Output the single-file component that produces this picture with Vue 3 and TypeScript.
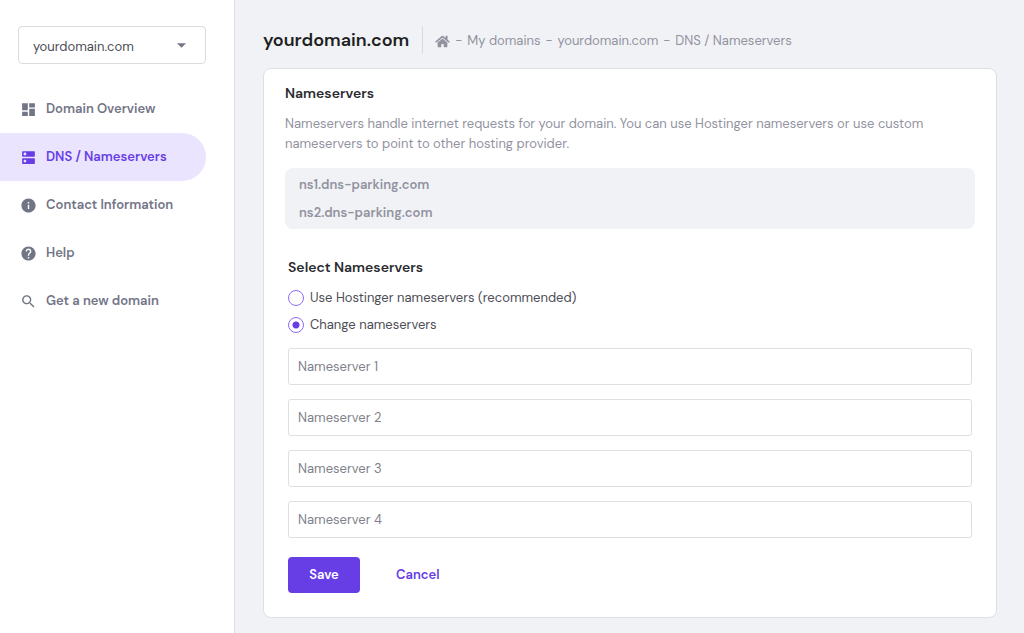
<script setup lang="ts">
import { ref } from 'vue'

interface NavItem {
  label: string
  path: string
}

const navItems: NavItem[] = [
  { label: 'Domain Overview', path: 'M3 13h8V3H3v10zm0 8h8v-6H3v6zm10 0h8V11h-8v10zm0-18v6h8V3h-8z' },
  {
    label: 'DNS / Nameservers',
    path: 'M20 13H4c-.55 0-1 .45-1 1v6c0 .55.45 1 1 1h16c.55 0 1-.45 1-1v-6c0-.55-.45-1-1-1zM7 19c-1.1 0-2-.9-2-2s.9-2 2-2 2 .9 2 2-.9 2-2 2zM20 3H4c-.55 0-1 .45-1 1v6c0 .55.45 1 1 1h16c.55 0 1-.45 1-1V4c0-.55-.45-1-1-1zM7 9c-1.1 0-2-.9-2-2s.9-2 2-2 2 .9 2 2-.9 2-2 2z',
  },
  {
    label: 'Contact Information',
    path: 'M12 2C6.48 2 2 6.48 2 12s4.48 10 10 10 10-4.48 10-10S17.52 2 12 2zm1 15h-2v-6h2v6zm0-8h-2V7h2v2z',
  },
  {
    label: 'Help',
    path: 'M12 2C6.48 2 2 6.48 2 12s4.48 10 10 10 10-4.48 10-10S17.52 2 12 2zm1 17h-2v-2h2v2zm2.07-7.75l-.9.92C13.45 12.9 13 13.5 13 15h-2v-.5c0-1.1.45-2.1 1.17-2.83l1.24-1.26c.37-.36.59-.86.59-1.41 0-1.1-.9-2-2-2s-2 .9-2 2H8c0-2.21 1.79-4 4-4s4 1.79 4 4c0 .88-.36 1.68-.93 2.25z',
  },
  {
    label: 'Get a new domain',
    path: 'M15.5 14h-.79l-.28-.27C15.41 12.59 16 11.11 16 9.5 16 5.91 13.09 3 9.5 3S3 5.91 3 9.5 5.91 16 9.5 16c1.61 0 3.09-.59 4.23-1.57l.27.28v.79l5 4.99L20.49 19l-4.99-5zm-6 0C7.01 14 5 11.99 5 9.5S7.01 5 9.5 5 14 7.01 14 9.5 11.99 14 9.5 14z',
  },
]

const activeItem = ref('DNS / Nameservers')
const domain = ref('yourdomain.com')
const mode = ref<'hostinger' | 'custom'>('custom')
const currentServers = ['ns1.dns-parking.com', 'ns2.dns-parking.com']
const crumbs = ['My domains', 'yourdomain.com', 'DNS / Nameservers']
const servers = ref<string[]>(['', '', '', ''])

function reset(): void {
  servers.value = ['', '', '', '']
}
</script>

<template>
  <div class="page">
    <aside class="sidebar">
      <div class="picker">
        <select v-model="domain" class="picker-select" aria-label="Domain">
          <option>yourdomain.com</option>
        </select>
        <svg class="picker-caret" viewBox="0 0 10 5" aria-hidden="true"><path d="M0 0h10L5 5z" /></svg>
      </div>
      <nav class="nav">
        <a
          v-for="item in navItems"
          :key="item.label"
          href="#"
          class="nav-link"
          :class="{ active: item.label === activeItem }"
          @click.prevent="activeItem = item.label"
        >
          <svg class="nav-icon" viewBox="0 0 24 24" aria-hidden="true"><path :d="item.path" /></svg>
          <span>{{ item.label }}</span>
        </a>
      </nav>
    </aside>

    <main class="main">
      <header class="header">
        <h1 class="title">yourdomain.com</h1>
        <nav class="crumbs" aria-label="Breadcrumb">
          <a href="#" class="crumb" aria-label="Home">
            <svg class="home" viewBox="0 0 576 512" aria-hidden="true">
              <path
                d="M280.37 148.26L96 300.11V464a16 16 0 0 0 16 16l112.06-.29a16 16 0 0 0 15.92-16V368a16 16 0 0 1 16-16h64a16 16 0 0 1 16 16v95.64a16 16 0 0 0 16 16.05L464 480a16 16 0 0 0 16-16V300L295.67 148.26a12.19 12.19 0 0 0-15.3 0zM571.6 251.47L488 182.56V44.05a12 12 0 0 0-12-12h-56a12 12 0 0 0-12 12v72.61L318.47 43a48 48 0 0 0-61 0L4.34 251.47a12 12 0 0 0-1.6 16.9l25.5 31A12 12 0 0 0 45.15 301l235.22-193.74a12.19 12.19 0 0 1 15.3 0L530.9 301a12 12 0 0 0 16.9-1.6l25.5-31a12 12 0 0 0-1.7-16.93z"
              />
            </svg>
          </a>
          <template v-for="crumb in crumbs" :key="crumb">
            <span>-</span>
            <a href="#" class="crumb">{{ crumb }}</a>
          </template>
        </nav>
      </header>

      <section class="card">
        <h2 class="heading">Nameservers</h2>
        <p class="intro">
          Nameservers handle internet requests for your domain. You can use Hostinger nameservers or use custom
          nameservers to point to other hosting provider.
        </p>
        <ul class="current">
          <li v-for="server in currentServers" :key="server">{{ server }}</li>
        </ul>

        <form class="form" @submit.prevent>
          <h2 class="heading">Select Nameservers</h2>
          <div class="options">
            <label class="option">
              <input v-model="mode" class="radio" type="radio" name="mode" value="hostinger" />
              Use Hostinger nameservers (recommended)
            </label>
            <label class="option">
              <input v-model="mode" class="radio" type="radio" name="mode" value="custom" />
              Change nameservers
            </label>
          </div>
          <div class="fields">
            <input
              v-for="(_, index) in servers"
              :key="index"
              v-model="servers[index]"
              class="field"
              type="text"
              :placeholder="`Nameserver ${index + 1}`"
              :aria-label="`Nameserver ${index + 1}`"
            />
          </div>
          <div class="actions">
            <button type="submit" class="button save">Save</button>
            <button type="button" class="button cancel" @click="reset">Cancel</button>
          </div>
        </form>
      </section>
    </main>
  </div>
</template>

<style>
body {
  margin: 0;
  background: #f1f2f6;
}
</style>

<style scoped>
.page {
  display: flex;
  min-height: 100vh;
  font-family: 'DM Sans', Inter, 'Open Sans', sans-serif;
  font-size: 13px;
  line-height: 20px;
  color: #36344d;
}

.sidebar {
  box-sizing: border-box;
  flex: 0 0 235px;
  padding-top: 26px;
  background: #fff;
  border-right: 1px solid #dfe0e4;
}

.picker {
  position: relative;
  margin: 0 28px 21px 18px;
}

.picker-select {
  box-sizing: border-box;
  display: block;
  width: 100%;
  height: 38px;
  padding: 3px 32px 0 14px;
  appearance: none;
  font: inherit;
  color: #4c4d55;
  background: #fff;
  border: 1px solid #dcdcde;
  border-radius: 4px;
}

.picker-caret {
  position: absolute;
  top: 17px;
  right: 20px;
  width: 9px;
  height: 5px;
  fill: #727586;
  pointer-events: none;
}

.nav {
  display: flex;
  flex-direction: column;
}

.nav-link {
  display: flex;
  align-items: center;
  gap: 9px;
  height: 48px;
  margin-right: 28px;
  padding-left: 20px;
  border-radius: 0 24px 24px 0;
  color: #727586;
  font-weight: 600;
  text-decoration: none;
}

.nav-link.active {
  color: #673de6;
  background: #ebe4ff;
}

.nav-icon {
  width: 17px;
  height: 17px;
  fill: currentColor;
}

.main {
  flex: 1;
  min-width: 0;
  padding: 26px 27px 15px 28px;
}

.header {
  display: flex;
  align-items: center;
  height: 28px;
  margin-bottom: 14px;
}

.title {
  margin: 0;
  padding-right: 13px;
  font-size: 18px;
  line-height: 28px;
  font-weight: 600;
  color: #1d1e20;
  border-right: 1px solid #d9dade;
}

.crumbs {
  display: flex;
  align-items: center;
  gap: 5px;
  padding: 2px 0 0 12px;
  color: #92939f;
}

.crumb {
  display: flex;
  color: inherit;
  text-decoration: none;
}

.home {
  width: 15px;
  height: 13px;
  fill: currentColor;
}

.card {
  padding: 14px 21px 24px;
  background: #fff;
  border: 1px solid #dfe0e3;
  border-radius: 8px;
}

.heading {
  margin: 0;
  font-size: 14px;
  line-height: 20px;
  font-weight: 600;
  color: #2a2b2f;
}

.intro {
  margin: 11px 0 14px;
  color: #92939f;
}

.current {
  margin: 0 0 28px;
  padding: 3px 14px 2px;
  list-style: none;
  line-height: 28px;
  font-weight: 600;
  color: #92939f;
  background: #f1f2f6;
  border-radius: 8px;
}

.form {
  padding: 0 3px;
}

.options {
  margin: 7px 0 10px;
}

.option {
  display: flex;
  align-items: center;
  gap: 6px;
  height: 27px;
  color: #4c4d55;
}

.radio {
  box-sizing: border-box;
  width: 16px;
  height: 16px;
  margin: 0;
  appearance: none;
  border: 1px solid #8f6df0;
  border-radius: 50%;
}

.radio:checked {
  background: radial-gradient(circle, #673de6 3px, #fff 4px);
}

.fields {
  display: flex;
  flex-direction: column;
  gap: 14px;
}

.field {
  box-sizing: border-box;
  width: 100%;
  height: 37px;
  padding: 0 9px;
  font: inherit;
  color: #2a2b2f;
  background: #fff;
  border: 1px solid #dfdfe1;
  border-radius: 3px;
}

.field::placeholder {
  color: #7f828a;
  opacity: 1;
}

.actions {
  display: flex;
  gap: 24px;
  margin-top: 19px;
}

.button {
  height: 36px;
  padding: 0;
  font: inherit;
  font-weight: 600;
  border: 0;
  border-radius: 4px;
  cursor: pointer;
}

.save {
  width: 72px;
  color: #fff;
  background: #673de6;
}

.cancel {
  padding: 0 12px;
  color: #673de6;
  background: transparent;
}
</style>
